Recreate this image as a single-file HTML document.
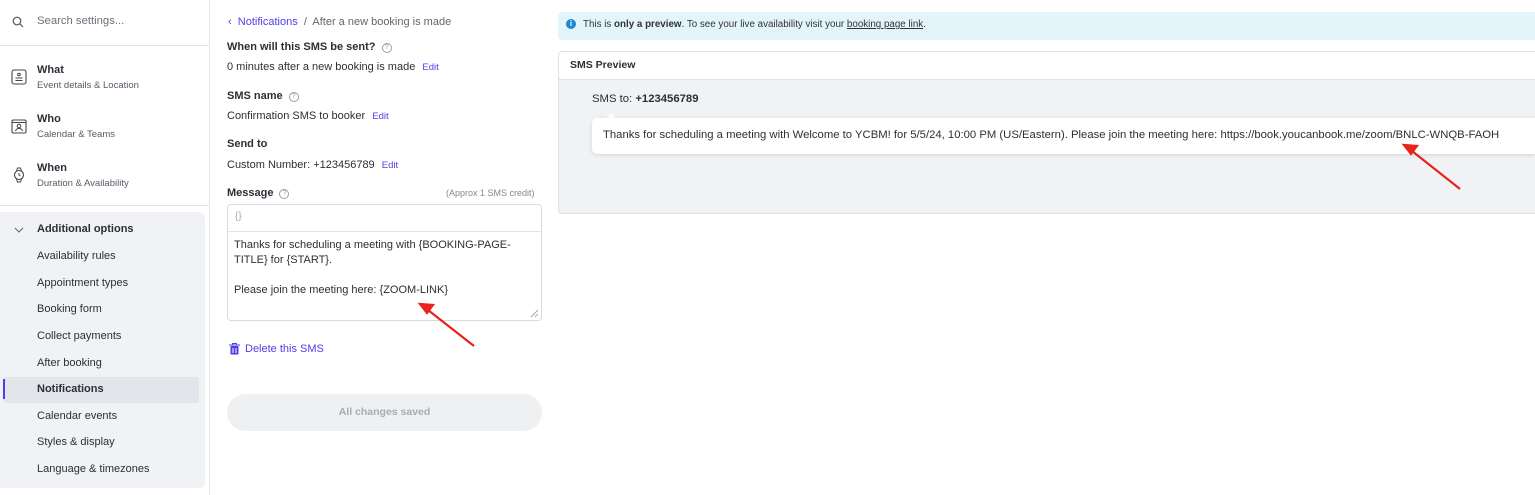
<!DOCTYPE html>
<html><head><meta charset="utf-8"><style>
*{box-sizing:border-box;margin:0;padding:0}
body{width:1535px;height:495px;overflow:hidden;background:#fff;font-family:"Liberation Sans",sans-serif;color:#2b2f36;font-size:11px;position:relative}
.a{position:absolute;white-space:nowrap}
.side{position:absolute;left:0;top:0;width:210px;height:495px;border-right:1px solid #e3e5e9}
.b{font-weight:bold}
.sub{font-size:9.5px;color:#555b66}
.purple{color:#4f3ee6}
.item{position:absolute;left:37px;font-size:11px;color:#2b2f36}
.q{display:inline-block;width:10px;height:10px;border:1px solid #9aa0a8;border-radius:50%;font-size:7px;line-height:8px;text-align:center;color:#9aa0a8;margin-left:6px;vertical-align:1px;font-weight:normal}
</style></head><body>
<div class="side">
  <svg class="a" style="left:12px;top:16px" width="12" height="12" viewBox="0 0 12 12"><circle cx="5" cy="5" r="3.8" fill="none" stroke="#555" stroke-width="1.2"/><path d="M8 8l3 3" stroke="#555" stroke-width="1.2"/></svg>
  <div class="a" style="left:37px;top:15px;color:#6b717a;font-size:11.3px">Search settings...</div>
  <div class="a" style="left:0;top:45px;width:210px;border-top:1px solid #e3e5e9"></div>
  <svg class="a" style="left:11px;top:69px" width="16" height="16" viewBox="0 0 16 16"><rect x="1" y="1" width="14" height="14" rx="2" fill="none" stroke="#444" stroke-width="1.1"/><circle cx="8" cy="5.5" r="1.3" fill="none" stroke="#444"/><path d="M4.5 9h7M4.5 11.5h7" stroke="#444"/></svg>
  <div class="a b" style="left:37px;top:64px">What</div><div class="a sub" style="left:37px;top:80px">Event details &amp; Location</div>
  <svg class="a" style="left:11px;top:117px" width="16" height="17" viewBox="0 0 16 17"><rect x="1" y="3" width="14" height="13" rx="1.5" fill="none" stroke="#444" stroke-width="1.1"/><path d="M1 5.5h14" stroke="#444"/><circle cx="8" cy="9" r="1.8" fill="none" stroke="#444"/><path d="M4.5 14c.5-2 2-2.5 3.5-2.5s3 .5 3.5 2.5" fill="none" stroke="#444"/></svg>
  <div class="a b" style="left:37px;top:113px">Who</div><div class="a sub" style="left:37px;top:129px">Calendar &amp; Teams</div>
  <svg class="a" style="left:12px;top:166px" width="14" height="18" viewBox="0 0 14 18"><circle cx="7" cy="9" r="4.5" fill="none" stroke="#444" stroke-width="1.1"/><path d="M4.5 5l1-3h3l1 3M4.5 13l1 3h3l1-3M7 7v2l1.5 1" fill="none" stroke="#444"/></svg>
  <div class="a b" style="left:37px;top:162px">When</div><div class="a sub" style="left:37px;top:178px">Duration &amp; Availability</div>
  <div class="a" style="left:0;top:205px;width:210px;border-top:1px solid #e3e5e9"></div>
  <div class="a" style="left:0;top:212px;width:205px;height:276px;background:#f0f2f5;border-radius:0 6px 6px 0"></div>
  <svg class="a" style="left:14px;top:227px" width="10" height="6" viewBox="0 0 10 6"><path d="M1 1l4 4 4-4" fill="none" stroke="#666" stroke-width="1.1"/></svg>
  <div class="a b" style="left:37px;top:223px">Additional options</div>
  <div class="item a" style="top:250px">Availability rules</div>
  <div class="item a" style="top:277px">Appointment types</div>
  <div class="item a" style="top:303px">Booking form</div>
  <div class="item a" style="top:330px">Collect payments</div>
  <div class="item a" style="top:357px">After booking</div>
  <div class="a" style="left:3px;top:377px;width:196px;height:26px;background:#e2e5e9;border-radius:3px"></div>
  <div class="a" style="left:3px;top:379px;width:2px;height:20px;background:#4f3ee6"></div>
  <div class="item a b" style="top:383px">Notifications</div>
  <div class="item a" style="top:410px">Calendar events</div>
  <div class="item a" style="top:436px">Styles &amp; display</div>
  <div class="item a" style="top:463px">Language &amp; timezones</div>
</div>

<div class="a" style="left:228px;top:16px"><span class="purple">&lsaquo;&nbsp; Notifications</span> <span style="color:#666">&nbsp;/&nbsp; After a new booking is made</span></div>
<div class="a b" style="left:227px;top:41px">When will this SMS be sent?<span class="q">?</span></div>
<div class="a" style="left:227px;top:61px">0 minutes after a new booking is made <span class="purple" style="font-size:9.5px;margin-left:4px">Edit</span></div>
<div class="a b" style="left:227px;top:90px">SMS name<span class="q">?</span></div>
<div class="a" style="left:227px;top:110px">Confirmation SMS to booker <span class="purple" style="font-size:9.5px;margin-left:4px">Edit</span></div>
<div class="a b" style="left:227px;top:138px">Send to</div>
<div class="a" style="left:227px;top:159px">Custom Number: +123456789 <span class="purple" style="font-size:9.5px;margin-left:4px">Edit</span></div>
<div class="a b" style="left:227px;top:187px">Message<span class="q">?</span></div>
<div class="a" style="left:446px;top:188px;font-size:9px;color:#888">(Approx 1 SMS credit)</div>
<div class="a" style="left:227px;top:204px;width:315px;height:117px;border:1px solid #d8dbe0;border-radius:4px"></div>
<div class="a" style="left:228px;top:231px;width:313px;border-top:1px solid #e3e5e9"></div>
<div class="a" style="left:235px;top:211px;color:#aaa;font-size:10px">{}</div>
<div class="a" style="left:234px;top:238px;line-height:15px">Thanks for scheduling a meeting with {BOOKING-PAGE-<br>TITLE} for {START}.<br><br>Please join the meeting here: {ZOOM-LINK}</div>
<svg class="a" style="left:530px;top:309px" width="9" height="9"><path d="M1 8l7-7M5 8l3-3" stroke="#aaa"/></svg>
<svg class="a" style="left:229px;top:343px" width="11" height="12" viewBox="0 0 11 12"><path d="M0 2h11M3.5 2V0.5h4V2" stroke="#4f3ee6" fill="none"/><rect x="1.5" y="3" width="8" height="8.5" fill="#4f3ee6"/><path d="M4 5v5M7 5v5" stroke="#fff"/></svg>
<div class="a purple" style="left:245px;top:343px">Delete this SMS</div>
<div class="a" style="left:227px;top:394px;width:315px;height:37px;background:#eff0f2;border-radius:19px;text-align:center;line-height:37px;color:#a8abb1;font-weight:bold;font-size:10.5px">All changes saved</div>

<div class="a" style="left:558px;top:12px;width:977px;height:28px;background:#e3f4fb;border-radius:4px 0 0 4px"></div>
<div class="a" style="left:566px;top:19px;width:10px;height:10px;border-radius:50%;background:#1f86d1;color:#fff;font-size:8px;font-weight:bold;text-align:center;line-height:10px">i</div>
<div class="a" style="left:583px;top:19px;font-size:9.8px;color:#333">This is <b>only a preview</b>. To see your live availability visit your <u>booking page link</u>.</div>
<div class="a" style="left:558px;top:51px;width:990px;height:163px;border:1px solid #dcdfe4;border-radius:4px;background:#f0f2f6;overflow:hidden">
  <div style="height:28px;background:#fff;border-bottom:1px solid #dcdfe4;padding:7px 0 0 11px;font-weight:bold;font-size:10.5px">SMS Preview</div>
</div>
<div class="a" style="left:592px;top:93px;font-size:11.3px">SMS to: <b>+123456789</b></div>
<div class="a" style="left:605px;top:113px;width:0;height:0;border-left:6px solid transparent;border-right:6px solid transparent;border-bottom:6px solid #fff"></div>
<div class="a" style="left:592px;top:118px;width:943px;height:36px;background:#fff;border-radius:5px 0 0 5px;box-shadow:0 1px 4px rgba(0,0,0,.12);padding:11px 0 0 11px;font-size:11.3px">Thanks for scheduling a meeting with Welcome to YCBM! for 5/5/24, 10:00 PM (US/Eastern). Please join the meeting here: https://book.youcanbook.me/zoom/BNLC-WNQB-FAOH</div>

<svg class="a" style="left:0;top:0" width="1535" height="495">
<g stroke="#e8231c" stroke-width="2.2" fill="#e8231c">
<path d="M474 346L428 310"/><path d="M420 304l13 1-6 8z"/>
<path d="M1460 189L1412 151"/><path d="M1404 145l13 1-6 8z"/>
</g></svg>
</body></html>
